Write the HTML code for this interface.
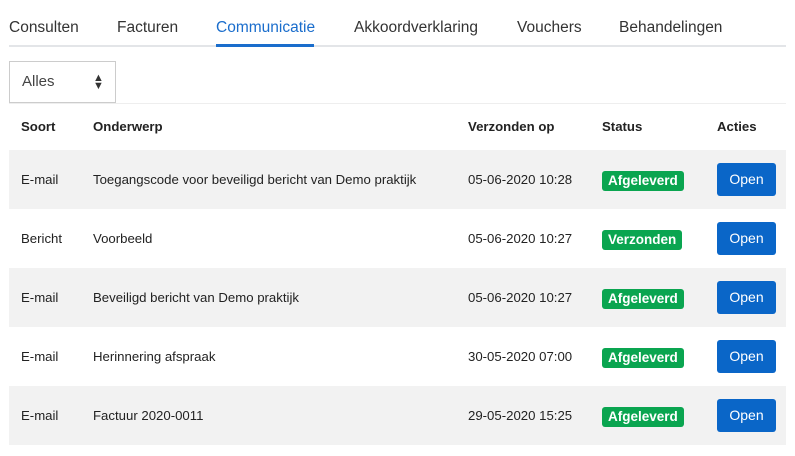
<!DOCTYPE html>
<html><head><style>
body{margin:0;width:795px;height:456px;background:#fff;font-family:"Liberation Sans",sans-serif;color:#222;position:relative;overflow:hidden}
.a{position:absolute;white-space:nowrap}
.tab{top:19px;font-size:15.5px;color:#333}
.row{position:absolute;left:9px;width:777px;height:59px}
.c{position:absolute;font-size:13.2px;top:22px}
.b{position:absolute;left:593px;top:21px;height:20px;line-height:20px;background:#0aa550;color:#fff;font-weight:bold;font-size:13.5px;padding:0 6px;border-radius:3px}
.btn{position:absolute;left:708px;top:13px;width:59px;height:33px;line-height:33px;text-align:center;background:#0a66c8;color:#fff;font-size:14px;border-radius:3px}
</style></head><body>
<div class="a tab" style="left:9px">Consulten</div>
<div class="a tab" style="left:117px">Facturen</div>
<div class="a tab" style="left:216px;color:#1a6dcc">Communicatie</div>
<div class="a tab" style="left:354px">Akkoordverklaring</div>
<div class="a tab" style="left:517px">Vouchers</div>
<div class="a tab" style="left:619px">Behandelingen</div>
<div class="a" style="left:9px;top:45px;width:777px;height:2px;background:#e3e5e8"></div>
<div class="a" style="left:216px;top:44px;width:98px;height:3px;background:#1a6dcc"></div>
<div class="a" style="left:9px;top:61px;width:105px;height:40px;border:1px solid #ccc"></div>
<div class="a" style="left:22px;top:73px;font-size:15px;color:#444">Alles</div>
<div class="a" style="left:93px;top:74px;font-size:11px;line-height:8px;color:#333">▲<br>▼</div>
<div class="a" style="left:9px;top:103px;width:777px;height:1px;background:#eee"></div>
<div class="row" style="top:104px;height:46px">
<div class="c" style="left:12px;top:15px;font-weight:bold">Soort</div>
<div class="c" style="left:84px;top:15px;font-weight:bold">Onderwerp</div>
<div class="c" style="left:459px;top:15px;font-weight:bold">Verzonden op</div>
<div class="c" style="left:593px;top:15px;font-weight:bold">Status</div>
<div class="c" style="left:708px;top:15px;font-weight:bold">Acties</div>
</div>
<div class="row" style="top:150px;background:#f2f2f2"><div class="c" style="left:12px">E-mail</div><div class="c" style="left:84px">Toegangscode voor beveiligd bericht van Demo praktijk</div><div class="c" style="left:459px">05-06-2020 10:28</div><div class="b">Afgeleverd</div><div class="btn">Open</div></div>
<div class="row" style="top:209px"><div class="c" style="left:12px">Bericht</div><div class="c" style="left:84px">Voorbeeld</div><div class="c" style="left:459px">05-06-2020 10:27</div><div class="b">Verzonden</div><div class="btn">Open</div></div>
<div class="row" style="top:268px;background:#f2f2f2"><div class="c" style="left:12px">E-mail</div><div class="c" style="left:84px">Beveiligd bericht van Demo praktijk</div><div class="c" style="left:459px">05-06-2020 10:27</div><div class="b">Afgeleverd</div><div class="btn">Open</div></div>
<div class="row" style="top:327px"><div class="c" style="left:12px">E-mail</div><div class="c" style="left:84px">Herinnering afspraak</div><div class="c" style="left:459px">30-05-2020 07:00</div><div class="b">Afgeleverd</div><div class="btn">Open</div></div>
<div class="row" style="top:386px;background:#f2f2f2"><div class="c" style="left:12px">E-mail</div><div class="c" style="left:84px">Factuur 2020-0011</div><div class="c" style="left:459px">29-05-2020 15:25</div><div class="b">Afgeleverd</div><div class="btn">Open</div></div>
</body></html>
